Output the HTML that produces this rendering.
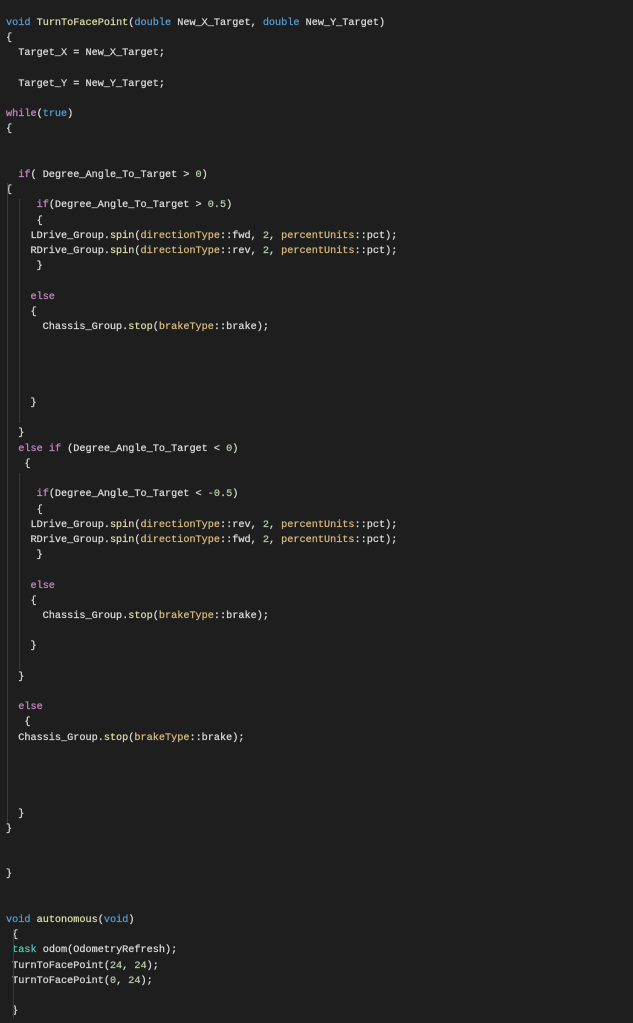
<!DOCTYPE html>
<html><head><meta charset="utf-8"><style>
html,body{margin:0;padding:0;background:#1e1e1e;width:633px;height:1023px;overflow:hidden}
pre{margin:0;padding:16px 0 0 6px;font-family:"Liberation Mono","DejaVu Sans Mono",monospace;font-size:10.2px;line-height:15.2px;color:#dadada;white-space:pre;-webkit-text-stroke:0.25px}
.k{color:#569cd6}.c{color:#c586c0}.f{color:#dcdcaa}.n{color:#b5cea8}.t{color:#d7ba7d}.m{color:#4ec9b0}
.g{position:absolute;width:1px;background:#3a3a3a}
</style></head><body>
<div class="g" style="left:7px;top:183px;height:640px"></div>
<div class="g" style="left:19px;top:199px;height:224px"></div>
<div class="g" style="left:19px;top:473px;height:196px"></div>
<div class="g" style="left:13px;top:929px;height:90px"></div>
<pre><span class="k">void</span> <span class="f">TurnToFacePoint</span>(<span class="k">double</span> New_X_Target, <span class="k">double</span> New_Y_Target)
{
  Target_X = New_X_Target;

  Target_Y = New_Y_Target;

<span class="c">while</span>(<span class="k">true</span>)
{


  <span class="c">if</span>( Degree_Angle_To_Target &gt; <span class="n">0</span>)
{
     <span class="c">if</span>(Degree_Angle_To_Target &gt; <span class="n">0.5</span>)
     {
    LDrive_Group.<span class="f">spin</span>(<span class="t">directionType</span>::fwd, <span class="n">2</span>, <span class="t">percentUnits</span>::pct);
    RDrive_Group.<span class="f">spin</span>(<span class="t">directionType</span>::rev, <span class="n">2</span>, <span class="t">percentUnits</span>::pct);
     }

    <span class="c">else</span>
    {
      Chassis_Group.<span class="f">stop</span>(<span class="t">brakeType</span>::brake);




    }

  }
  <span class="c">else</span> <span class="c">if</span> (Degree_Angle_To_Target &lt; <span class="n">0</span>)
   {

     <span class="c">if</span>(Degree_Angle_To_Target &lt; <span class="n">-0.5</span>)
     {
    LDrive_Group.<span class="f">spin</span>(<span class="t">directionType</span>::rev, <span class="n">2</span>, <span class="t">percentUnits</span>::pct);
    RDrive_Group.<span class="f">spin</span>(<span class="t">directionType</span>::fwd, <span class="n">2</span>, <span class="t">percentUnits</span>::pct);
     }

    <span class="c">else</span>
    {
      Chassis_Group.<span class="f">stop</span>(<span class="t">brakeType</span>::brake);

    }

  }

  <span class="c">else</span>
   {
  Chassis_Group.<span class="f">stop</span>(<span class="t">brakeType</span>::brake);




  }
}


}


<span class="k">void</span> <span class="f">autonomous</span>(<span class="k">void</span>)
 {
 <span class="m">task</span> odom(OdometryRefresh);
 TurnToFacePoint(<span class="n">24</span>, <span class="n">24</span>);
 TurnToFacePoint(<span class="n">0</span>, <span class="n">24</span>);

 }</pre>
</body></html>
